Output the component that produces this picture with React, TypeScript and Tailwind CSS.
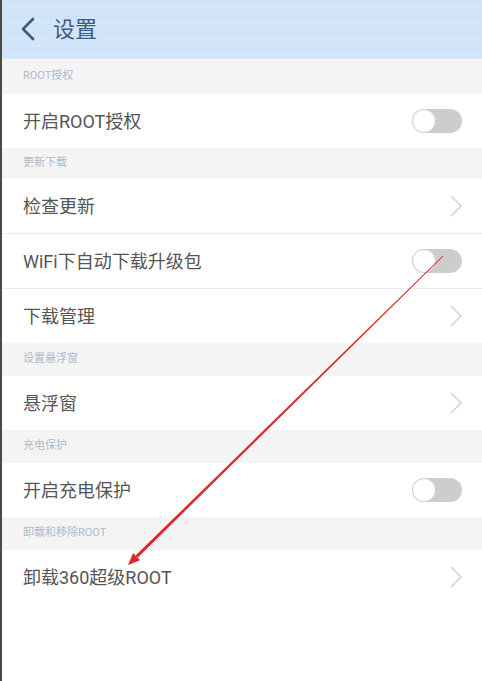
import React from "react";

const font = "font-['Roboto','Noto_Sans_CJK_SC',sans-serif]";

function SectionHeader({ title, size }: { title: string; size?: "lg" | "sm" }) {
  const h = size === "lg" ? "h-[35px]" : size === "sm" ? "h-[31px]" : "h-[33px]";
  return (
    <div className={`flex items-center bg-[#f4f4f4] pl-[21px] text-[11px] text-[#aebacb] ${h}`}>
      {title}
    </div>
  );
}

function Toggle() {
  return (
    <div className="relative h-[24px] w-[50px] rounded-full bg-[#cdcdcd]">
      <div className="absolute left-0 top-0 h-[24px] w-[24px] rounded-full border border-[#d2d2d2] bg-white" />
    </div>
  );
}

function Chevron() {
  return (
    <svg width="12" height="22" viewBox="0 0 12 22" fill="none">
      <path d="M1 1l10 10L1 21" stroke="#cfcfcf" strokeWidth="1.4" strokeLinejoin="round" />
    </svg>
  );
}

function Row({ label, toggle }: { label: string; toggle?: boolean }) {
  return (
    <div className="flex h-[54px] items-center justify-between bg-white pl-[21px] pr-[20px]">
      <span className="text-[18px] text-[#555555]">{label}</span>
      {toggle ? <Toggle /> : <Chevron />}
    </div>
  );
}

function Divider() {
  return <div className="h-px bg-[#ececec]" />;
}

export default function App() {
  return (
    <div className={`relative min-h-[681px] w-[482px] overflow-hidden border-l-2 border-[#4a4a4a] bg-white ${font}`}>
      <div className="flex h-[59px] items-center border-b border-[#dde9f6] bg-[#d3e5f9] bg-[linear-gradient(to_right,rgba(110,150,200,0.05)_1px,transparent_1px),linear-gradient(to_bottom,rgba(110,150,200,0.05)_1px,transparent_1px)] bg-[size:16px_16px] pl-[18px]">
        <svg width="16" height="24" viewBox="0 0 16 24" fill="none">
          <path d="M13 2L3 12l10 10" stroke="#3f5b7e" strokeWidth="2.6" strokeLinecap="round" strokeLinejoin="round" />
        </svg>
        <span className="ml-[17px] text-[22px] text-[#3d5a80]">设置</span>
      </div>

      <SectionHeader title="ROOT授权" size="lg" />
      <Row label="开启ROOT授权" toggle />

      <SectionHeader title="更新下载" size="sm" />
      <Row label="检查更新" />
      <Divider />
      <Row label="WiFi下自动下载升级包" toggle />
      <Divider />
      <Row label="下载管理" />

      <SectionHeader title="设置悬浮窗" />
      <Row label="悬浮窗" />

      <SectionHeader title="充电保护" />
      <Row label="开启充电保护" toggle />

      <SectionHeader title="卸载和移除ROOT" />
      <Row label="卸载360超级ROOT" />

      <svg className="pointer-events-none absolute left-[-2px] top-0" width="482" height="681" viewBox="0 0 482 681">
        <polygon points="443.35,256.36 442.65,255.64 135.55,555.53 137.65,557.67" fill="#dc2a2a" />
        <polygon points="128,565 140.1,560.2 133.1,553" fill="#dc2a2a" />
      </svg>
    </div>
  );
}
